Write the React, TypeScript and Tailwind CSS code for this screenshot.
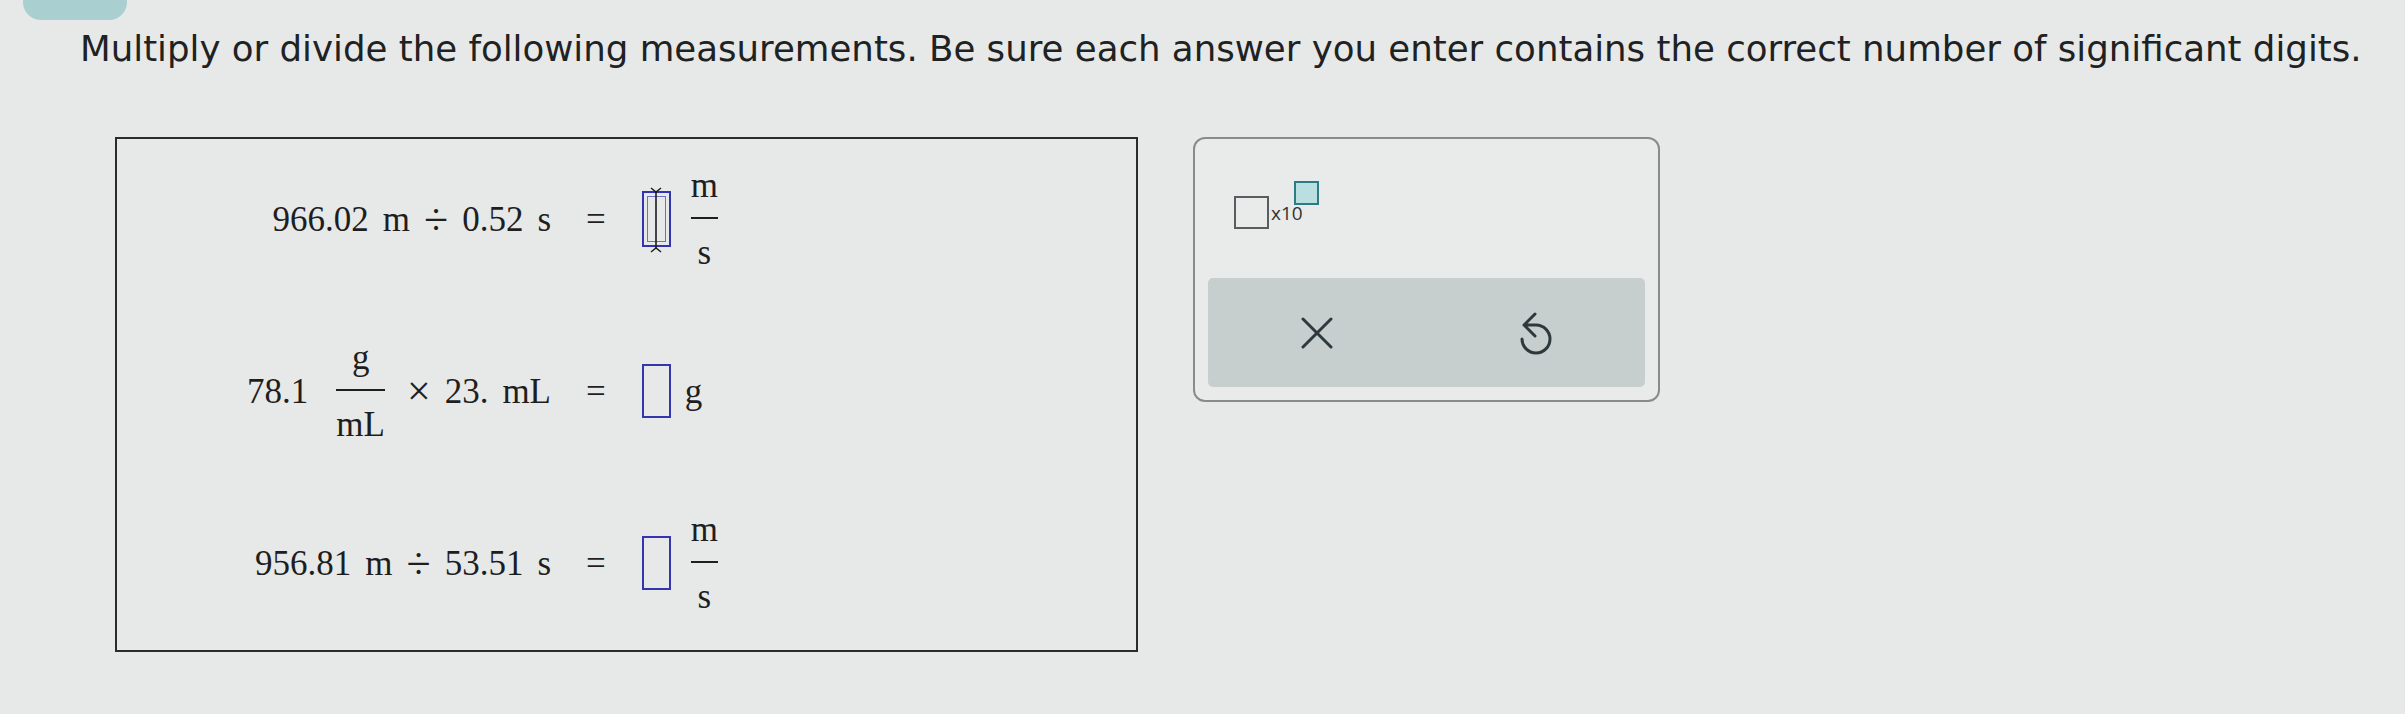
import type { ReactNode } from 'react'

const ink = 'text-[#1e1e1e]'

const Frac = ({ num, den, pad = 'px-[6px]' }: { num: string; den: string; pad?: string }) => {
	return (
		<span className={`inline-flex flex-col items-center ${pad}`}>
			<span className="pb-[14px] leading-[35px]">{num}</span>
			<span className="h-[2px] w-full bg-[#1e1e1e]" />
			<span className="pt-[16px] leading-[35px]">{den}</span>
		</span>
	)
}

const AnswerBox = ({ focused }: { focused?: boolean }) => {
	if (!focused) {
		return <span className="ml-[36px] block h-[54px] w-[29px] border-[2.5px] border-[#3535ad]" />
	}
	return (
		<span className="relative ml-[36px] block h-[56px] w-[29px] border-[2.5px] border-[#3434b0]">
			<span className="absolute inset-[3px] border border-[#7070d0]" />
			<svg className="absolute -top-[6px] left-[4px]" width="16" height="66" viewBox="0 0 16 66">
				<path d="M8 4v58" stroke="#1b1b1b" strokeWidth="1.6" />
				<path d="M3 1l5 4 5-4M3 65l5-4 5 4" stroke="#1b1b1b" strokeWidth="1.4" fill="none" />
			</svg>
		</span>
	)
}

const Row = ({ left, focused, unit }: { left: ReactNode; focused?: boolean; unit: ReactNode }) => {
	return (
		<div className="flex h-[120px] items-center">
			<div className="flex w-[434px] items-center justify-end">{left}</div>
			<span className="ml-[35px] leading-[35px]">=</span>
			<AnswerBox focused={focused} />
			<span className="ml-[14px] flex items-center leading-[35px]">{unit}</span>
		</div>
	)
}

const App = () => {
	return (
		<div className="min-h-[714px] w-full bg-[#e7e9e8] font-['DejaVu_Sans',sans-serif]">
			<div className="ml-[23px] h-[20px] w-[104px] rounded-b-[18px] bg-[#a9cfd0]" />

			<h1 className="mt-[8px] ml-[80px] text-[35.6px] leading-[42px] font-normal whitespace-nowrap text-[#1f2223]">
				Multiply or divide the following measurements. Be sure each answer you enter contains the correct number of significant digits.
			</h1>

			<div className="mt-[67px] ml-[115px] flex items-start gap-[55px]">
				<div
					className={`flex h-[515px] w-[1023px] flex-col gap-[52px] border-2 border-[#2b2b2b] pt-[20px] font-['Liberation_Serif',serif] text-[35px] ${ink}`}
				>
					<Row
						focused
						left={
							<span className="flex items-center gap-[14px] leading-[35px]">
								<span>966.02</span>
								<span>m</span>
								<span className="text-[44px]">÷</span>
								<span>0.52</span>
								<span>s</span>
							</span>
						}
						unit={<Frac num="m" den="s" />}
					/>
					<Row
						left={
							<span className="flex items-center leading-[35px]">
								<span>78.1</span>
								<span className="ml-[20px]">
									<Frac num="g" den="mL" pad="px-[8px]" />
								</span>
								<span className="ml-[14px] text-[42px]">×</span>
								<span className="ml-[14px]">23.</span>
								<span className="ml-[14px]">mL</span>
							</span>
						}
						unit={<span>g</span>}
					/>
					<Row
						left={
							<span className="flex items-center gap-[14px] leading-[35px]">
								<span>956.81</span>
								<span>m</span>
								<span className="text-[44px]">÷</span>
								<span>53.51</span>
								<span>s</span>
							</span>
						}
						unit={<Frac num="m" den="s" />}
					/>
				</div>

				<div className="flex h-[265px] w-[467px] flex-col rounded-[12px] border-2 border-[#868c8d] bg-[#e9ebea] px-[13px] pb-[13px]">
					<div className="mt-[42px] ml-[26px] flex h-[48px] items-start">
						<span className="mt-[15px] block h-[33px] w-[35px] border-[2.5px] border-[#585d60]" />
						<span className="mt-[20px] ml-[2px] font-['Open_Sans',sans-serif] text-[19px] leading-[24px] text-[#333]">
							x10
						</span>
						<span className="-ml-[9px] block h-[24px] w-[25px] border-2 border-[#2b7c84] bg-[#b9dfe0]" />
					</div>
					<div className="mt-auto flex h-[109px] rounded-[5px] bg-[#c6cfce]">
						<div className="flex flex-1 items-center justify-center">
							<svg width="32" height="32" viewBox="0 0 32 32">
								<path d="M2 2l28 28M30 2L2 30" stroke="#2e393d" strokeWidth="3" strokeLinecap="round" />
							</svg>
						</div>
						<div className="flex flex-1 items-center justify-center">
							<svg width="40" height="48" viewBox="0 0 40 48">
								<path
									d="M19 5l-11 11 11 11M8 16h12a14 14 0 1 1-14 14"
									stroke="#2e393d"
									strokeWidth="3"
									strokeLinecap="round"
									strokeLinejoin="round"
									fill="none"
								/>
							</svg>
						</div>
					</div>
				</div>
			</div>
		</div>
	)
}

export default App
